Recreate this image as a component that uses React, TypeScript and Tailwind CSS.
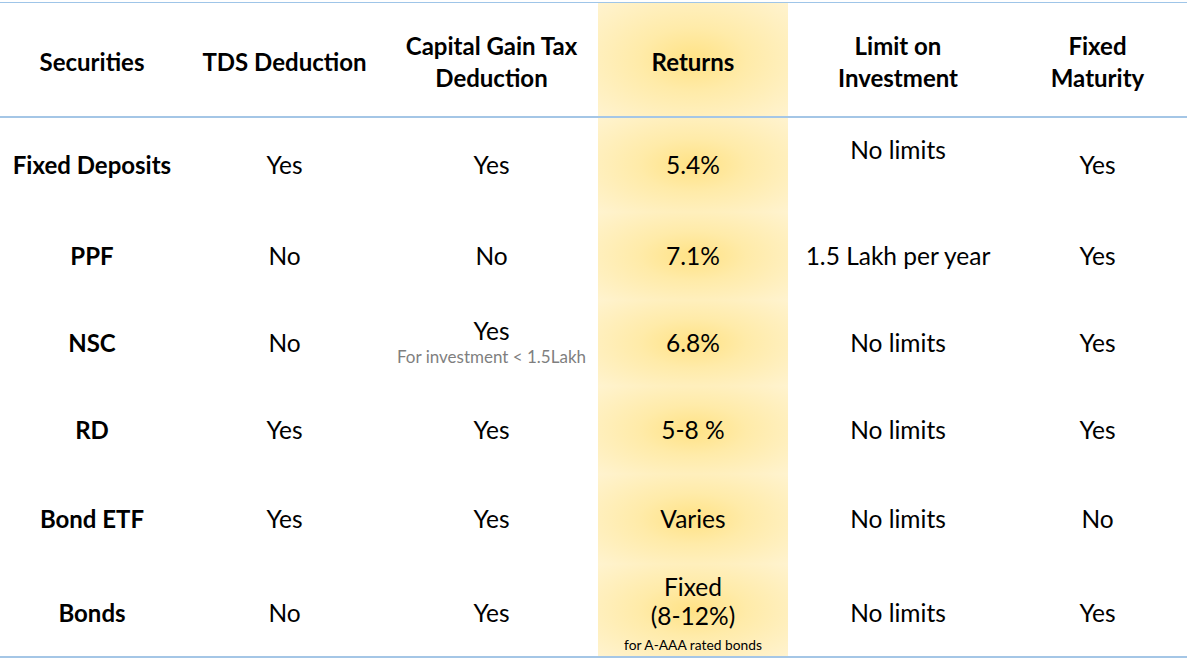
const FONT = "font-['Lato','Liberation_Sans',sans-serif]";

type Row = {
  name: string;
  tds: string;
  cgt: string;
  cgtNote?: string;
  ret: string[];
  retNote?: string;
  limit: string;
  limitTop?: boolean;
  fixed: string;
  h: string;
};

const rows: Row[] = [
  { name: 'Fixed Deposits', tds: 'Yes', cgt: 'Yes', ret: ['5.4%'], limit: 'No limits', limitTop: true, fixed: 'Yes', h: 'h-[94px]' },
  { name: 'PPF', tds: 'No', cgt: 'No', ret: ['7.1%'], limit: '1.5 Lakh per year', fixed: 'Yes', h: 'h-[88px]' },
  { name: 'NSC', tds: 'No', cgt: 'Yes', cgtNote: 'For investment < 1.5Lakh', ret: ['6.8%'], limit: 'No limits', fixed: 'Yes', h: 'h-[86px]' },
  { name: 'RD', tds: 'Yes', cgt: 'Yes', ret: ['5-8 %'], limit: 'No limits', fixed: 'Yes', h: 'h-[88px]' },
  { name: 'Bond ETF', tds: 'Yes', cgt: 'Yes', ret: ['Varies'], limit: 'No limits', fixed: 'No', h: 'h-[90px]' },
  {
    name: 'Bonds',
    tds: 'No',
    cgt: 'Yes',
    ret: ['Fixed', '(8-12%)'],
    retNote: 'for A-AAA rated bonds',
    limit: 'No limits',
    fixed: 'Yes',
    h: 'h-[92px] pt-[6px]',
  },
];

const cols = 'grid grid-cols-[184px_201px_213px_190px_220px_179px]';
const glow = 'bg-[radial-gradient(ellipse_at_center,#ffe285_0%,#ffeba9_40%,#fff3cf_100%)]';
const head = 'flex items-center justify-center text-center pt-[5px]';

export default function App() {
  return (
    <div className={`w-[1187px] h-[662px] bg-white text-black ${FONT} pt-[2px]`}>
      <div className="border-t-[1.5px] border-[#9fc5e8]">
        {/* header */}
        <div className={`${cols} h-[115px] border-b-2 border-[#a4c6e6] text-[24px] font-bold leading-[32px]`}>
          <div className={head}>Securities</div>
          <div className={head}>TDS Deduction</div>
          <div className={head}>Capital Gain Tax<br />Deduction</div>
          <div className={`${head} ${glow}`}>Returns</div>
          <div className={head}>Limit on<br />Investment</div>
          <div className={head}>Fixed<br />Maturity</div>
        </div>

        {rows.map((r) => (
          <div key={r.name} className={`${cols} ${r.h} text-[24.5px] leading-[28px] text-center`}>
            <div className="flex items-center justify-center text-[24px] font-bold">{r.name}</div>
            <div className="flex items-center justify-center">{r.tds}</div>
            <div className="flex flex-col items-center justify-center">
              <span>{r.cgt}</span>
              {r.cgtNote && <span className="text-[17px] leading-[24px] text-[#7f7f7f]">{r.cgtNote}</span>}
            </div>
            <div className={`flex flex-col items-center justify-center ${glow} ${r.retNote ? '-mt-[6px] pt-[6px]' : ''}`}>
              {r.ret.map((t) => (
                <span key={t} className={r.retNote ? 'leading-[29.5px]' : ''}>{t}</span>
              ))}
              {r.retNote && <span className="mt-[4px] text-[13.8px] leading-[20px]">{r.retNote}</span>}
            </div>
            <div className={`flex items-center justify-center ${r.limitTop ? 'pb-[30px]' : ''}`}>{r.limit}</div>
            <div className="flex items-center justify-center">{r.fixed}</div>
          </div>
        ))}
        <div className="border-t-2 border-[#a4c6e6]" />
      </div>
    </div>
  );
}
